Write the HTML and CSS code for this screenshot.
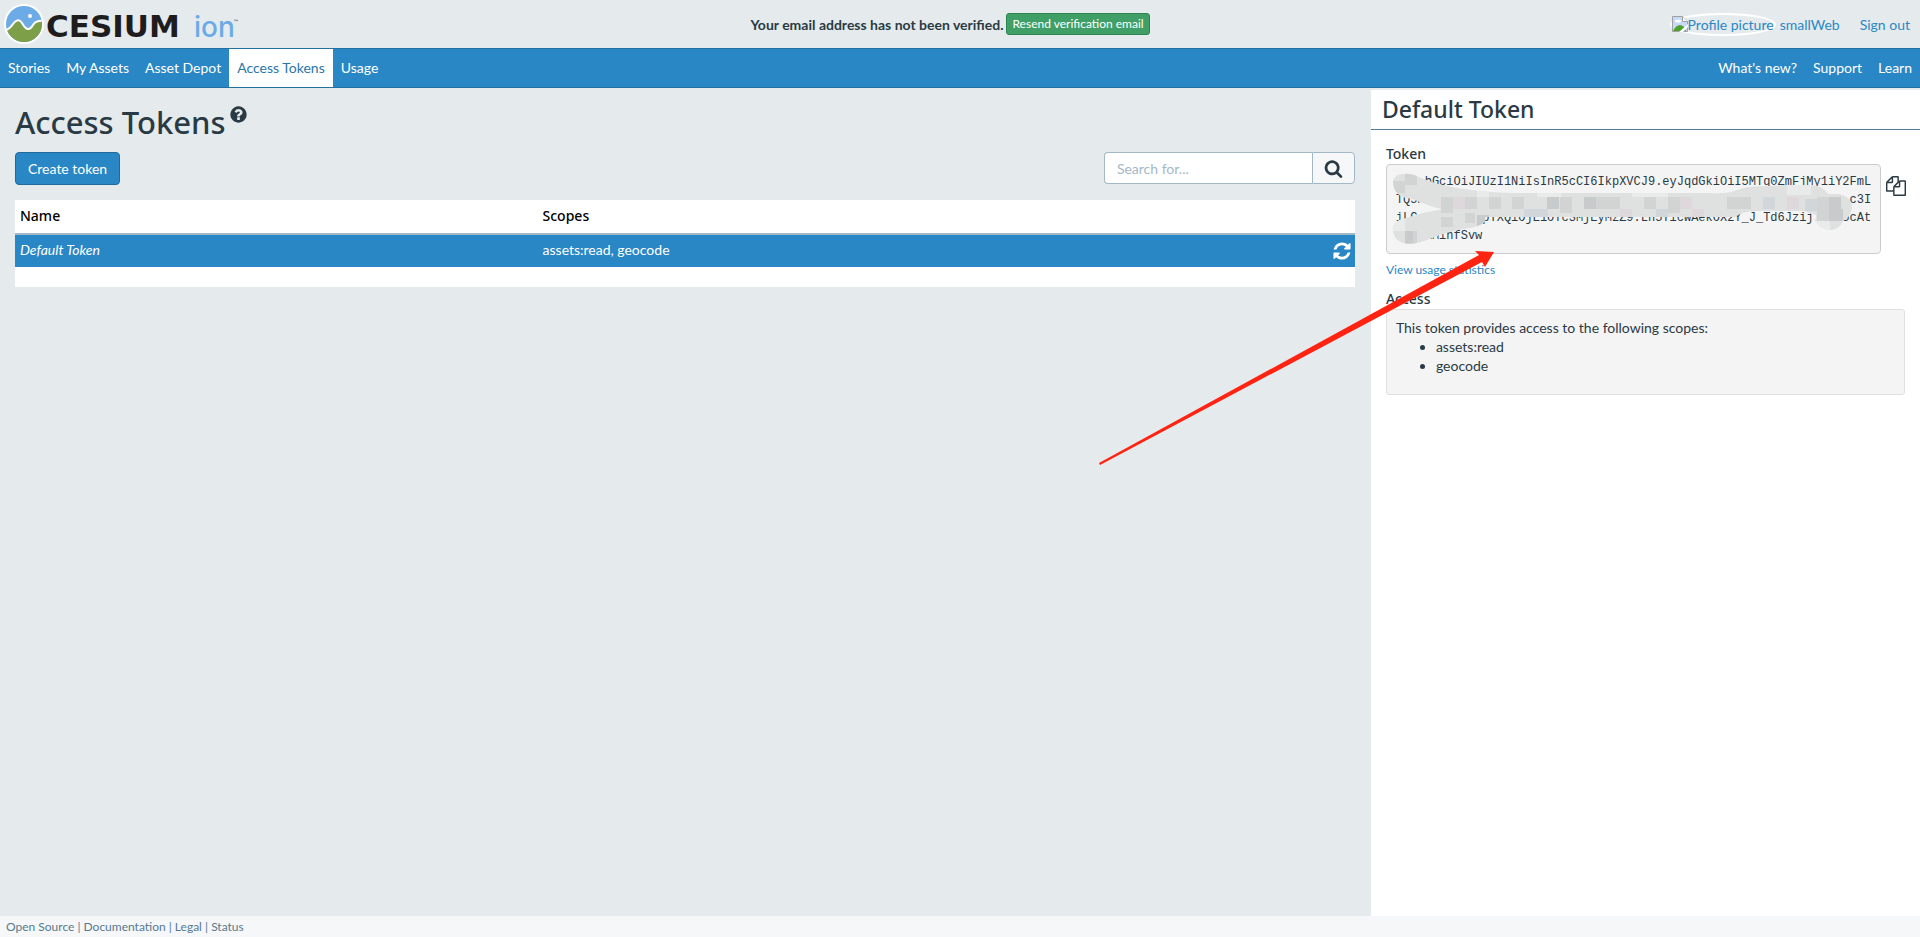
FILE: index.html
```html
<!DOCTYPE html>
<html lang="en">
<head>
  <meta charset="UTF-8">
  <title>Access Tokens | Cesium ion</title>
  <link rel="stylesheet" href="styles.css">
</head>
<body>
  <header class="header">
    <a class="logo" href="#" aria-label="Cesium ion">
      <svg width="240" height="48" viewBox="0 0 240 48">
        <defs>
          <clipPath id="globe"><circle cx="24" cy="24" r="18"/></clipPath>
        </defs>
        <circle cx="24" cy="24" r="20" fill="#fff"/>
        <g clip-path="url(#globe)">
          <rect x="4" y="4" width="40" height="40" fill="#6cabe6"/>
          <path d="M4 32 Q10 29 13 24 Q18 17 22 24 Q28 34 33 26 Q36 20 44 22 V44 H4z" fill="#7c9f47"/>
          <path d="M4 31 Q9 30 13 24 Q18 17 22 23 Q28 34 33 25 Q36 20 44 21" fill="none" stroke="#fff" stroke-width="2"/>
        </g>
        <circle cx="30" cy="16" r="2" fill="#fff"/>
        <text class="logo-name" x="46" y="37">CESIUM</text>
        <text class="logo-ion" x="194" y="37">ion</text>
        <text class="logo-tm" x="233" y="24">™</text>
      </svg>
    </a>
    <div class="verify">
      <span>Your email address has not been verified.</span>
      <button class="btn-verify">Resend verification email</button>
    </div>
    <div class="account">
      <a class="profile" href="#">
        <span class="avatar">
          <svg width="16" height="16" viewBox="0 0 16 16">
            <path d="M0.5 0.5h10l5 5v10h-15z" fill="#c6d9f7" stroke="#a0a0a0"/>
            <path d="M10.500 0.500v5h5" fill="#fff" stroke="#a0a0a0"/>
            <ellipse cx="6" cy="5" rx="3" ry="1.500" fill="#fff"/>
            <path d="M1 15q3-6 7-6t6 6z" fill="#4da32f"/>
            <path d="M7 16l9-8v3l-5 5z" fill="#fff"/>
          </svg>Profile picture</span>
        smallWeb
      </a>
      <a href="#">Sign out</a>
    </div>
  </header>

  <nav class="navbar">
    <div class="nav-group">
      <a href="#">Stories</a>
      <a href="#">My Assets</a>
      <a href="#">Asset Depot</a>
      <a class="active" href="#">Access Tokens</a>
      <a href="#">Usage</a>
    </div>
    <div class="nav-group">
      <a href="#">What's new?</a>
      <a href="#">Support</a>
      <a href="#">Learn</a>
    </div>
  </nav>

  <div class="content">
    <main class="tokens">
      <h1>Access Tokens
        <svg class="help" width="19" height="19" viewBox="0 0 1792 1792"><path d="M1024 1376v-192q0-14-9-23t-23-9h-192q-14 0-23 9t-9 23v192q0 14 9 23t23 9h192q14 0 23-9t9-23zm256-672q0-88-55.5-163t-138.500-116-170-41q-243 0-371 213-15 24 8 42l132 100q7 6 19 6 16 0 25-12 53-68 86-92 34-24 86-24 48 0 85.500 26t37.500 59q0 38-20 61t-68 45q-63 28-115.500 86.500t-52.500 125.500v36q0 14 9 23t23 9h192q14 0 23-9t9-23q0-19 21.500-49.500t54.500-49.500q32-18 49-28.500t46-35 44.500-48 28-60.500 12.500-81zm384 192q0 209-103 385.500t-279.500 279.500-385.500 103-385.500-103-279.500-279.500-103-385.500 103-385.500 279.500-279.500 385.500-103 385.500 103 279.500 279.500 103 385.500z"/></svg>
      </h1>

      <div class="toolbar">
        <button class="btn-create">Create token</button>
        <form class="search">
          <input type="text" placeholder="Search for..." aria-label="Search for tokens">
          <button type="button" aria-label="Search">
            <svg width="19" height="19" viewBox="0 0 1792 1792"><path d="M1216 832q0-185-131.500-316.500t-316.500-131.500-316.500 131.500-131.500 316.500 131.500 316.500 316.500 131.500 316.500-131.500 131.500-316.500zm512 832q0 52-38 90t-90 38q-54 0-90-38l-343-342q-179 124-399 124-143 0-273.500-55.500t-225-150-150-225-55.500-273.500 55.500-273.500 150-225 225-150 273.500-55.500 273.500 55.500 225 150 150 225 55.500 273.500q0 220-124 399l343 343q37 37 37 90z"/></svg>
          </button>
        </form>
      </div>

      <div class="table-panel">
        <table>
          <thead>
            <tr>
              <th class="col-name">Name</th>
              <th>Scopes</th>
              <th class="col-action"></th>
            </tr>
          </thead>
          <tbody>
            <tr class="selected">
              <td><em>Default Token</em></td>
              <td>assets:read, geocode</td>
              <td class="col-action">
                <button class="btn-icon" aria-label="Regenerate">
                  <svg width="20" height="20" viewBox="0 0 1792 1792"><path d="M1639 1056q0 5-1 7-64 268-268 434.500t-478 166.500q-146 0-282.500-55t-243.500-157l-129 129q-19 19-45 19t-45-19-19-45v-448q0-26 19-45t45-19h448q26 0 45 19t19 45-19 45l-137 137q71 66 161 102t187 36q134 0 250-65t186-179q11-17 53-117 8-23 30-23h192q13 0 22.500 9.500t9.500 22.500zm25-800v448q0 26-19 45t-45 19h-448q-26 0-45-19t-19-45 19-45l138-138q-148-137-349-137-134 0-250 65t-186 179q-11 17-53 117-8 23-30 23h-199q-13 0-22.500-9.500t-9.500-22.500v-7q65-268 270-434.500t480-166.500q146 0 284 55.500t245 156.500l130-129q19-19 45-19t45 19 19 45z"/></svg>
                </button>
              </td>
            </tr>
          </tbody>
        </table>
      </div>
    </main>

    <aside class="details">
      <h2>Default Token</h2>
      <div class="details-body">
        <h3>Token</h3>
        <div class="token-row">
          <div class="token-box">
            <pre>    bGciOiJIUzI1NiIsInR5cCI6IkpXVCJ9.eyJqdGkiOiI5MTg0ZmFjMy1iY2FmL
TQ5M                                                           c3I
iLC         pYXQiOjE1OTc3MjEyMzZ9.Ln5YicwAekOX2Y_J_Td6Jzij7   5cAt
    AMihfSvw</pre>
            <svg class="mask" width="495" height="89" viewBox="0 0 495 89">
              <defs>
                <clipPath id="smudge">
                  <path d="M6 16Q8 9 16 9Q24 8 32 12Q48 19 65 22Q90 27 125 28H325Q340 29 350 25Q360 21 380 21L401 20H425Q436 21 441 29H451Q465 31 465 43Q463 53 456 56Q452 65 443 65Q432 64 429 56V50L418 46H370Q355 46 348 52H98V56Q94 62 77 64Q59 67 43 74Q30 79 21 79Q6 77 6 64Q6 57 15 54L36 48Q46 46 55 44Q45 42 35 38Q28 34 15 32Q6 27 6 16z"/>
                </clipPath>
              </defs>
              <g clip-path="url(#smudge)">
                <rect width="495" height="89" fill="#dfe1e1"/>
                <path fill="#d2d4d4" d="M6 16h12v12h-12zM18 8h12v12h-12zM54 32h12v16h-12zM78 32h12v12h-12zM102 32h12v12h-12zM125 32h12v12h-12zM173 32h12v16h-12zM209 32h24v12h-24zM257 32h12v12h-12zM281 32h12v16h-12zM340 32h24v12h-24zM430 32h12v24h-12zM18 66h12v14h-12zM54 52h12v10h-12zM78 48h10v10h-10z"/>
                <path fill="#c8cbcc" d="M160 32h12v12h-12zM197 32h12v12h-12zM90 50h12v12h-12zM442 32h12v12h-12zM442 44h14v12h-14zM18 66h8v12h-8z"/>
                <path fill="#ded8dc" d="M66 32h12v12h-12zM293 32h12v12h-12zM305 44h12v8h-12zM400 32h12v12h-12zM233 44h12v8h-12z"/>
                <path fill="#d0d6d9" d="M376 32h12v12h-12zM269 44h12v8h-12zM137 44h24v8h-24zM418 34h12v12h-12z"/>
                <path fill="#e9ebeb" d="M150 26h24v6h-24zM245 26h36v6h-36zM400 20h24v10h-24zM6 54h12v12h-12zM90 26h12v6h-12zM429 56h14v10h-14z"/>
              </g>
            </svg>
            <svg class="arrow" width="395" height="214" viewBox="0 0 395 214">
              <path d="M0 212L380 4L376 0L395 1L386 16L383 11L1 214z" fill="#ff2312"/>
            </svg>
          </div>
          <button class="btn-icon" aria-label="Copy token">
            <svg width="20" height="20" viewBox="0 0 1792 1792"><path d="M1696 384q40 0 68 28t28 68v1216q0 40-28 68t-68 28h-960q-40 0-68-28t-28-68v-288h-544q-40 0-68-28t-28-68v-672q0-40 20-88t48-76l408-408q28-28 76-48t88-20h416q40 0 68 28t28 68v328q68-40 128-40h416zm-544 213l-299 299h299v-299zm-640-384l-299 299h299v-299zm196 647l316-316v-416h-384v416q0 40-28 68t-68 28h-416v640h512v-256q0-40 20-88t48-76zm956 804v-1152h-384v416q0 40-28 68t-68 28h-416v640h896z"/></svg>
          </button>
        </div>
        <a class="usage-link" href="#">View usage statistics</a>

        <h3>Access</h3>
        <div class="access-box">
          <p>This token provides access to the following scopes:</p>
          <ul>
            <li>assets:read</li>
            <li>geocode</li>
          </ul>
        </div>
      </div>
    </aside>
  </div>

  <footer class="footer">
    <a href="#">Open Source</a> | <a href="#">Documentation</a> | <a href="#">Legal</a> | <a href="#">Status</a>
  </footer>
</body>
</html>
```

FILE: styles.css
```css
* { box-sizing: border-box; }

body {
  margin: 0;
  min-height: 100vh;
  display: flex;
  flex-direction: column;
  background: #e5ebed;
  color: #2a3a44;
  font-family: Lato, sans-serif;
  font-size: 14px;
  line-height: 19px;
}

a { color: #2a87c5; text-decoration: none; }
button, input { font-family: inherit; font-size: inherit; }
button { cursor: pointer; }
svg { display: block; fill: currentColor; }
h1, h2, h3 { margin: 0; font-family: "Noto Sans", sans-serif; font-weight: 500; }

/* Header */
.header {
  display: grid;
  grid-template-columns: 1fr auto 1fr;
  align-items: center;
  height: 48px;
}
.logo-name { font: bold 31px "DejaVu Sans", sans-serif; fill: #1e1c1d; }
.logo-ion { font: 500 28px Inter, sans-serif; fill: #6cabe6; }
.logo-tm { font: 6px "DejaVu Sans", sans-serif; fill: #1e1c1d; }
.verify {
  display: flex;
  align-items: center;
  gap: 3px;
  padding-right: 20px;
  font-weight: bold;
}
.btn-verify {
  padding: 1px 5px;
  border: 1px solid #2f854f;
  border-radius: 3px;
  background: #3f9f66;
  color: #fff;
  font-size: 12px;
  line-height: 18px;
}
.account { display: flex; justify-content: flex-end; align-items: center; gap: 20px; padding-right: 10px; }
.profile { display: flex; align-items: center; gap: 4px; }
.avatar {
  display: flex;
  align-items: center;
  border: 2px solid #fff;
  border-radius: 50%;
}

/* Navigation */
.navbar {
  display: flex;
  justify-content: space-between;
  border-top: 1px solid #2170a0;
  border-bottom: 1px solid #2170a0;
  background: #2a87c5;
}
.nav-group { display: flex; }
.nav-group a { padding: 9px 8px 10px; color: #fff; }
.nav-group .active { background: #fff; color: #2a76a8; }

/* Tokens list */
.content { flex: 1; display: flex; }
.tokens { flex: 1; min-width: 0; padding: 14px 16px 14px 15px; }
h1 { display: flex; gap: 3px; font-size: 31px; line-height: 40px; }
.help { margin-top: 3px; }
.toolbar { display: flex; justify-content: space-between; margin: 10px 0 15px; }
.btn-create {
  height: 33px;
  padding: 0 12px;
  border: 1px solid #216a9c;
  border-radius: 4px;
  background: #2a87c5;
  color: #fff;
}
.search { display: flex; height: 32px; }
.search input {
  width: 208px;
  padding: 0 12px;
  border: 1px solid #a3b8c5;
  border-right: 0;
  border-radius: 4px 0 0 4px;
  background: #fff;
}
.search input::placeholder { color: #a3b8c5; }
.search button {
  width: 43px;
  padding: 0 11px;
  border: 1px solid #a3b8c5;
  border-radius: 0 4px 4px 0;
  background: #f5f7f9;
  color: #2a3a44;
}

.table-panel { padding-bottom: 20px; background: #fff; }
table { width: 100%; border-collapse: collapse; table-layout: fixed; }
th {
  height: 34px;
  padding: 4px 5px 6px;
  border-bottom: 2px solid #a3b8c5;
  color: #000;
  font-family: "Noto Sans", sans-serif;
  font-weight: 500;
  text-align: left;
}
td { height: 33px; padding: 4px 5px 7px; }
.selected { background: #2a87c5; color: #fff; }
.col-name { width: 39%; }
.col-action { width: 40px; }
.btn-icon { display: block; padding: 0; border: 0; background: none; color: inherit; }
td .btn-icon { margin-left: auto; }
td.col-action { padding: 5px 3px; }

/* Token details */
.details { flex: none; width: 28.6%; margin-top: 2px; background: #fff; }
h2 {
  padding: 5px 11px;
  border-bottom: 1px solid #587a8f;
  font-size: 23px;
  line-height: 29px;
}
.details-body { padding: 14px 15px; }
h3 { margin-bottom: 1px; font-size: 14px; line-height: 19px; }
.token-row { display: flex; gap: 5px; align-items: flex-start; }
.token-row > .btn-icon { margin-top: 12px; }
.token-box {
  flex: 1;
  position: relative;
  padding: 8px 9px;
  border: 1px solid #ccc;
  border-radius: 4px;
  background: #f4f4f4;
}
pre {
  margin: 0;
  font-family: "Liberation Mono", monospace;
  font-size: 12px;
  line-height: 18px;
}
.mask { position: absolute; top: 0; left: 0; }
.arrow { position: absolute; top: 86px; left: -288px; pointer-events: none; }
.usage-link { display: block; margin: 6px 0 10px; font-size: 12px; }
.access-box {
  padding: 8px 9px 9px;
  border: 1px solid #e0e0e0;
  border-radius: 3px;
  background: #f4f4f4;
}
.access-box p { margin: 0; }
.access-box ul { margin: 0 0 10px; padding-left: 40px; }

.footer {
  padding: 1px 6px;
  background: #f5f7f9;
  color: #587a8f;
  font-size: 12px;
}
.footer a { color: inherit; }
```
